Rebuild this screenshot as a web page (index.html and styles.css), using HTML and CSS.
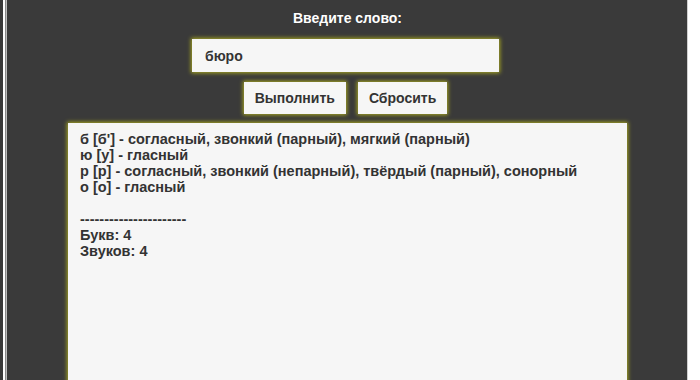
FILE: index.html
```html
<!DOCTYPE html>
<html lang="ru">
<head>
<meta charset="utf-8">
<title>Фонетический разбор</title>
<link rel="stylesheet" href="styles.css">
</head>
<body>
<div class="page">
  <div class="edge"></div>
  <main class="panel">
    <div class="label">Введите слово:</div>
    <input class="word" type="text" value="бюро">
    <div class="actions">
      <button class="btn">Выполнить</button>
      <button class="btn">Сбросить</button>
    </div>
    <div class="result">б [б'] - согласный, звонкий (парный), мягкий (парный)
ю [у] - гласный
р [р] - согласный, звонкий (непарный), твёрдый (парный), сонорный
о [о] - гласный

----------------------
Букв: 4
Звуков: 4</div>
  </main>
</div>
</body>
</html>
```

FILE: styles.css
```css
html, body {
  margin: 0;
  padding: 0;
  background: #ffffff;
  height: 100%;
  overflow: hidden;
}

.page {
  display: flex;
  height: 380px;
  font-family: "Liberation Sans", Arial, sans-serif;
}

.edge {
  width: 3px;
  background: #3a3a3a;
  border-right: 2px solid #ffffff;
}

.panel {
  width: 683px;
  background: #3a3a3a;
  border-left: 1px solid #8a8a8a;
  border-right: 1px solid #cfcfcf;
  box-shadow: inset 1px 0 0 #bdbdbd;
  display: flex;
  flex-direction: column;
  align-items: center;
  box-sizing: border-box;
  padding-top: 10px;
  padding-left: 2px;
  overflow: hidden;
}

.panel > * {
  flex-shrink: 0;
}

.label {
  color: #ffffff;
  font-weight: bold;
  font-size: 14px;
  line-height: 16px;
}

.word {
  margin-top: 13px;
  margin-right: 4px;
  width: 307px;
  height: 33px;
  box-sizing: border-box;
  border: none;
  background: #f6f6f6;
  padding: 0 13px;
  font-family: "Liberation Sans", Arial, sans-serif;
  font-weight: bold;
  font-size: 14px;
  color: #333333;
  box-shadow: 0 0 4px 1px #a8a820;
  outline: none;
}

.actions {
  margin-top: 10px;
  margin-right: 4px;
  display: flex;
  gap: 12px;
}

.btn {
  height: 32px;
  padding: 0 11px;
  border: none;
  background: #f6f6f6;
  font-family: "Liberation Sans", Arial, sans-serif;
  font-weight: bold;
  font-size: 14px;
  color: #333333;
  box-shadow: 0 0 4px 1px #a8a820;
}

.result {
  margin-top: 9px;
  width: 559px;
  height: 300px;
  box-sizing: border-box;
  background: #f6f6f6;
  padding: 8px 12px;
  white-space: pre-line;
  font-weight: bold;
  font-size: 14.5px;
  line-height: 16px;
  color: #333333;
  box-shadow: 0 0 4px 1px #a8a820;
}
```
